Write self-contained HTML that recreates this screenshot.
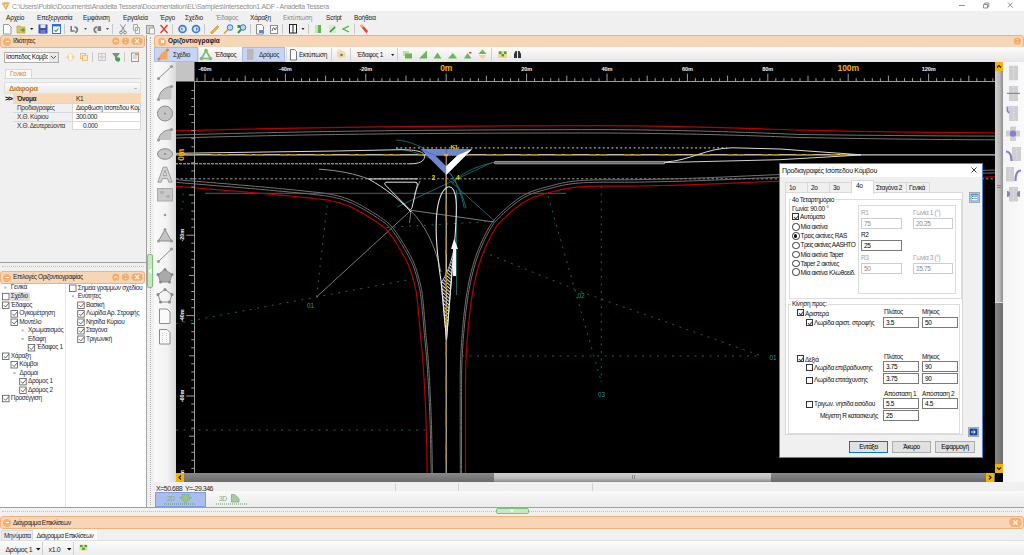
<!DOCTYPE html>
<html><head><meta charset="utf-8">
<style>
*{margin:0;padding:0;box-sizing:border-box}
html,body{width:1024px;height:555px;overflow:hidden}
body{position:relative;background:#f0f0f0;font-family:"Liberation Sans",sans-serif;font-size:6.5px;letter-spacing:-0.35px;color:#000;line-height:1}
.a{position:absolute}
.t{position:absolute;white-space:nowrap}
.hdr{position:absolute;height:13px;background:#f7d6b8;border:1px solid #f3b078;border-radius:3px}
.hdr .mi{position:absolute;left:2px;top:1.5px;width:8px;height:8px;border-radius:50%;background:#f4b274}
.hdr .mi:after{content:"";position:absolute;left:2.5px;top:3.5px;width:3px;height:1.2px;background:#fff}
.hdr .mi.dot:after{left:2.5px;top:2.5px;width:3px;height:3px}
.hb{position:absolute;top:1px;width:10px;height:10px;border-radius:5px;background:#f3b27a}
.sep{position:absolute;width:1px;background:#c8c8c8}
.cb{position:absolute;width:7px;height:7px;border:1px solid #333;background:#fff}
.cb.k:after{content:"";position:absolute;left:1.6px;top:0.2px;width:1.8px;height:3.6px;border:solid #444;border-width:0 .9px .9px 0;transform:rotate(40deg)}
.rd{position:absolute;width:7.5px;height:7.5px;border:1px solid #333;border-radius:50%;background:#fff}
.rd.k:after{content:"";position:absolute;left:1.2px;top:1.2px;width:3.1px;height:3.1px;border-radius:50%;background:#111}
.inp{position:absolute;height:11px;border:1px solid #7a7a7a;background:#fff;padding-left:2px;font-size:6.5px;line-height:9px}
.inp.d{border-color:#ccc;color:#8a8a8a;background:#fff}
.btn{position:absolute;height:12px;border:1px solid #adadad;background:#e1e1e1;text-align:center;line-height:10px}
</style></head><body>

<!-- Title bar -->
<div class="a" style="left:0;top:0;width:1024px;height:11px;background:#fff"></div>
<svg class="a" style="left:1px;top:1px" width="10" height="10" viewBox="0 0 10 10"><path d="M0.5 2 Q4.5 0.5 9 1.5 L5 9.5 Z" fill="#f6b26a"/><path d="M3.6 4 L5.6 3.6 L4.6 5.6 Z" fill="#fff"/></svg>
<div class="t" style="left:12px;top:2.8px;color:#8f8f8f;font-size:7px;letter-spacing:-0.3px">C:\Users\Public\Documents\Anadelta Tessera\Documentation\EL\Samples\Intersection1.ADF - Anadelta Tessera</div>
<svg class="a" style="left:955px;top:0" width="69" height="11" viewBox="955 0 69 11"><path d="M959 5.5h6" stroke="#777" stroke-width=".8"/><path d="M983.5 4.5h4v3.5h-4z M984.8 4.5v-1.5h4v3.8h-1.3" fill="none" stroke="#777" stroke-width=".8"/><path d="M1008 2.5l4.5 5M1012.5 2.5l-4.5 5" stroke="#777" stroke-width=".8"/></svg>

<!-- Menu bar -->
<div class="t" style="left:6px;top:15px;color:#1a1a1a;letter-spacing:-0.2px">Αρχείο</div>
<div class="t" style="left:37px;top:15px;color:#1a1a1a;letter-spacing:-0.2px">Επεξεργασία</div>
<div class="t" style="left:83px;top:15px;color:#1a1a1a;letter-spacing:-0.2px">Εμφάνιση</div>
<div class="t" style="left:123px;top:15px;color:#1a1a1a;letter-spacing:-0.2px">Εργαλεία</div>
<div class="t" style="left:160px;top:15px;color:#1a1a1a;letter-spacing:-0.2px">Έργο</div>
<div class="t" style="left:185px;top:15px;color:#1a1a1a;letter-spacing:-0.2px">Σχέδιο</div>
<div class="t" style="left:216px;top:15px;color:#8a8a8a;letter-spacing:-0.2px">Έδαφος</div>
<div class="t" style="left:250px;top:15px;color:#1a1a1a;letter-spacing:-0.2px">Χάραξη</div>
<div class="t" style="left:283px;top:15px;color:#8a8a8a;letter-spacing:-0.2px">Εκτύπωση</div>
<div class="t" style="left:326px;top:15px;color:#1a1a1a;letter-spacing:-0.2px">Script</div>
<div class="t" style="left:354px;top:15px;color:#1a1a1a;letter-spacing:-0.2px">Βοήθεια</div>

<!-- Toolbar -->
<svg class="a" style="left:0;top:23px" width="380" height="12" viewBox="0 0 380 12">
<!-- new doc -->
<path d="M3.5 1.5h5l2.5 2.5v7h-7.5z" fill="#fff" stroke="#9a9a9a" stroke-width="1"/>
<!-- open folder -->
<path d="M17 3h3l1 1h4v6h-8z" fill="#e6c25a" stroke="#b8942a" stroke-width=".6"/>
<path d="M20 7h4M22.5 5.5l1.7 1.5-1.7 1.5" stroke="#3aa640" stroke-width="1.2" fill="none"/>
<path d="M30 5h3.5l-1.75 2z" fill="#222"/>
<!-- save -->
<rect x="38.5" y="1.5" width="9" height="9" fill="#3e50b8"/>
<rect x="40.5" y="1.5" width="5" height="3.5" fill="#e8e8f4"/>
<rect x="40.5" y="7" width="5" height="3.5" fill="#6c7cd0"/>
<!-- window icon -->
<rect x="52.5" y="1.5" width="8" height="9" fill="#fff" stroke="#3a6fc8" stroke-width="1"/>
<rect x="52.5" y="1.5" width="8" height="2" fill="#3a6fc8"/>
<path d="M54.5 7l1.5 1.5 2.5-3" stroke="#2a9a40" stroke-width="1.1" fill="none"/>
<rect x="64" y="1" width="1" height="10" fill="#c8c8c8"/>
<!-- undo -->
<path d="M71.2 3v5h3.5" stroke="#7a7a7a" stroke-width="1.6" fill="none"/><path d="M74.5 4.2a2.6 2.6 0 1 1 0.5 5.2" stroke="#7a7a7a" stroke-width="1.8" fill="none"/>
<path d="M84 5h3l-1.5 2z" fill="#555"/>
<!-- redo -->
<path d="M97 4.2a2.6 2.6 0 1 0 -0.3 5.2" stroke="#7a7a7a" stroke-width="1.8" fill="none"/><rect x="97.5" y="3.2" width="3.6" height="4.8" fill="#7a7a7a"/>
<path d="M106 5h3l-1.5 2z" fill="#555"/>
<rect x="112" y="1" width="1" height="10" fill="#c8c8c8"/>
<!-- cut -->
<path d="M120.5 1.5l4.5 7M125.5 1.5l-4.5 7" stroke="#8a8a8a" stroke-width="1"/>
<circle cx="121" cy="9.5" r="1.4" fill="none" stroke="#8a8a8a"/><circle cx="125" cy="9.5" r="1.4" fill="none" stroke="#8a8a8a"/>
<!-- copy -->
<path d="M133.5 1.5h4v6h-4z M135.5 4.5h4v6h-4z" fill="#f4f4f4" stroke="#a8a8a8" stroke-width="1"/>
<!-- paste -->
<rect x="146.5" y="2.5" width="7" height="8" fill="#d0d0d0" stroke="#9a9a9a"/>
<rect x="149.5" y="5" width="5" height="6" fill="#f4f4f4" stroke="#9a9a9a" stroke-width=".8"/>
<!-- red X -->
<path d="M160.5 2l7 8M167.5 2l-7 8" stroke="#e53d2a" stroke-width="1.4"/>
<rect x="172" y="1" width="1" height="10" fill="#c8c8c8"/>
<!-- blue circles -->
<circle cx="182.5" cy="6" r="4.3" fill="#3a7ad8"/><circle cx="182.5" cy="6" r="2.6" fill="#fff" opacity=".85"/><path d="M180.5 6l2-1.8v3.6z" fill="#3a7ad8"/>
<circle cx="196" cy="6" r="4.3" fill="#3a7ad8"/><circle cx="196" cy="6" r="2.6" fill="#fff" opacity=".85"/><path d="M198 6l-2-1.8v3.6z" fill="#3a7ad8"/>
<rect x="204" y="1" width="1" height="10" fill="#c8c8c8"/>
<!-- ruler -->
<path d="M210.5 9.5l7-7 1.5 1.5-7 7z" fill="#e8b840" stroke="#b88a20" stroke-width=".6"/>
<!-- magnifier -->
<circle cx="230" cy="4.5" r="2.8" fill="#bcd8f4" stroke="#3a78c8" stroke-width="1"/><path d="M228 6.5l-4 4" stroke="#d8a020" stroke-width="1.6"/>
<circle cx="243" cy="4.5" r="2.8" fill="#bcd8f4" stroke="#3a78c8" stroke-width="1"/><path d="M241 6.5l-3 3.5" stroke="#3a9a30" stroke-width="2"/><rect x="237.5" y="2" width="3" height="3" fill="#3a9a30"/>
<rect x="250" y="1" width="1" height="10" fill="#c8c8c8"/>
<!-- doc -->
<path d="M256.5 1.5h5l2 2v7.5h-7z" fill="#fff" stroke="#8a8a8a"/><rect x="259" y="7" width="4" height="3" fill="#5a8ad8"/>
<rect x="270.5" y="2.5" width="7" height="8" fill="#fff" stroke="#8a8a8a"/><path d="M272 8c1-4 2-4 2.5-2s1 1 2-2" stroke="#333" stroke-width=".8" fill="none"/>
<rect x="282" y="1" width="1" height="10" fill="#c8c8c8"/>
<!-- window split -->
<rect x="289.5" y="1.5" width="7" height="8.5" fill="#fff" stroke="#222" stroke-width="1"/><rect x="292.5" y="1.5" width="1" height="8.5" fill="#222"/>
<path d="M301.5 5h3l-1.5 2z" fill="#222"/>
<rect x="308" y="1" width="1" height="10" fill="#c8c8c8"/>
<!-- green icons -->
<rect x="315" y="2" width="6" height="8" fill="#c4e4a8"/><rect x="318" y="2" width="3" height="8" fill="#5cb84a"/>
<rect x="329" y="2" width="7" height="8" fill="#d8ecc8"/><path d="M330 9l5-5" stroke="#2a9a30" stroke-width="1.6"/>
<rect x="342" y="2" width="7" height="8" fill="#eef4e4"/><path d="M349 3l-6 3 6 3" stroke="#4ab040" stroke-width="1.3" fill="none"/>
<rect x="354" y="1" width="1" height="10" fill="#c8c8c8"/>
<!-- pencil -->
<path d="M360 2.5l2-1 6 6.5-1.5 2.5z" fill="#e84030"/><path d="M360 2.5l2-1 2 2-2 1z" fill="#f0c040"/>
</svg>


<!-- Left properties panel -->
<div class="hdr" style="left:0;top:35px;width:145px"><div class="mi"></div></div>
<div class="t" style="left:13px;top:38px;color:#222">Ιδιότητες</div>
<!-- header buttons -->
<svg class="a" style="left:110px;top:35px" width="36" height="12" viewBox="110 35 36 12"><circle cx="115.8" cy="41.1" r="3.6" fill="#f2ae70"/><circle cx="125.5" cy="41.1" r="3.6" fill="#f2ae70"/><rect x="131.4" y="37.5" width="11.4" height="7.2" rx="3.6" fill="#f2ae70"/><path d="M114.2 41.9l1.6-1.6 1.6 1.6" stroke="#fff" stroke-width="1" fill="none"/><path d="M125.5 39.2v0.8M125.5 42.2v0.8" stroke="#fff" stroke-width="1.1"/><path d="M135.3 39.1l3.6 4M138.9 39.1l-3.6 4" stroke="#fff" stroke-width="1.1"/></svg>
<!-- combo -->
<div class="a" style="left:4px;top:52px;width:55px;height:11px;background:#fff;border:1px solid #adadad"></div>
<div class="a" style="left:49px;top:53px;width:9px;height:9px;background:#e8e8e8"></div>
<div class="t" style="left:6px;top:54px;color:#111;width:42px;overflow:hidden">Ισόπεδος Κόμβος</div>
<svg class="a" style="left:50px;top:55px" width="7" height="5"><path d="M1 1l2.5 2.5 2.5-2.5" stroke="#555" fill="none"/></svg>
<svg class="a" style="left:64px;top:51px" width="80" height="12" viewBox="64 0 80 12">
<path d="M66 6l4.5-4.5 4.5 4.5-4.5 4.5z" fill="#f4d6a0"/><rect x="69.5" y="3" width="2" height="6" fill="#fff"/>
<rect x="80.5" y="2.5" width="5" height="5" fill="none" stroke="#f0c070"/><rect x="82.5" y="4.5" width="5" height="5" fill="#fbe8c0" stroke="#f0c070"/>
<rect x="92" y="1" width="1" height="10" fill="#c8c8c8"/>
<rect x="98.5" y="2.5" width="7" height="7" fill="#eee" stroke="#c8c8c8"/><path d="M98.5 6h7M102 2.5v7" stroke="#c8c8c8"/>
<path d="M112 2h8l-3 4v4l-2-1v-3z" fill="#888"/><circle cx="118" cy="8.5" r="2.2" fill="#3aa83a"/>
<rect x="124" y="1" width="1" height="10" fill="#c8c8c8"/>
<rect x="131.5" y="2" width="7" height="8.5" fill="#f4f4f4" stroke="#9a9a9a"/><path d="M133 5h4M133 7h4" stroke="#aaa" stroke-width=".7"/><path d="M135 3.5h4" stroke="#e89030" stroke-width="1.2"/>
</svg>
<!-- tab strip -->
<div class="a" style="left:5px;top:69px;width:27px;height:10px;background:#fafafa;border:1px solid #d8d8d8;border-bottom:none"></div>
<div class="a" style="left:4px;top:78px;width:137px;height:1px;background:#d8d8d8"></div>
<div class="t" style="left:10px;top:71px;color:#d08a40">Γενικά</div>
<!-- property grid -->
<div class="a" style="left:4px;top:82px;width:137px;height:12px;background:linear-gradient(#fbfbfb,#e9e9e9);border:1px solid #e0e0e0"></div>
<div class="t" style="left:9px;top:85px;color:#c8782a;font-weight:bold;font-size:7.5px">Διάφορα</div>
<div class="a" style="left:134px;top:88px;width:3px;height:1px;background:#bbb"></div>
<div class="a" style="left:13px;top:94px;width:128px;height:36px;background:#fff;border:1px solid #d8d8d8"></div>
<div class="a" style="left:13px;top:94px;width:128px;height:9px;background:#f8d7b5"></div>
<div class="a" style="left:13px;top:103px;width:59px;height:27px;background:#f0f0f0"></div>
<div class="a" style="left:13px;top:103px;width:128px;height:1px;background:#d8d8d8"></div>
<div class="a" style="left:13px;top:112px;width:128px;height:1px;background:#d8d8d8"></div>
<div class="a" style="left:13px;top:121px;width:128px;height:1px;background:#d8d8d8"></div>
<div class="a" style="left:72px;top:94px;width:1px;height:36px;background:#d8d8d8"></div>
<div class="t" style="left:5px;top:95px;font-weight:bold;font-size:8px;letter-spacing:-1.5px">&gt;&gt;</div>
<div class="t" style="left:17px;top:96px;color:#222;font-weight:bold">Όνομα</div>
<div class="t" style="left:76px;top:96px;color:#222">K1</div>
<div class="t" style="left:17px;top:105px;color:#333">Προδιαγραφές</div>
<div class="t" style="left:76px;top:105px;color:#222;width:64px;overflow:hidden">Διόρθωση Ισόπεδου Κόμβου</div>
<div class="t" style="left:17px;top:114px;color:#333">Χ.Θ. Κύριου</div>
<div class="t" style="left:76px;top:114px;color:#222">300.000</div>
<div class="t" style="left:17px;top:123px;color:#333">Χ.Θ. Δευτερεύοντα</div>
<div class="t" style="left:83px;top:123px;color:#222">0.000</div>


<!-- Splitter vertical -->
<div class="a" style="left:146px;top:35px;width:1px;height:472px;background:#a0a0a0"></div>
<div class="a" style="left:150px;top:37px;width:1px;height:468px;border-left:1px dotted #b0b0b0"></div>

<!-- Main panel header -->
<div class="hdr" style="left:154px;top:35px;width:870px"><div class="mi dot" style="left:3px"></div></div>
<div class="t" style="left:168px;top:38px;color:#1a1a2a;font-weight:bold;letter-spacing:0">Οριζοντιογραφία</div>

<!-- Main tool row -->
<div class="a" style="left:154px;top:47px;width:870px;height:15px;background:linear-gradient(#fdfdfd,#e6e6e6)"></div>
<div class="a" style="left:154px;top:47px;width:44px;height:15px;background:#c7d5f3;border:1px solid #a8bcec"></div>
<div class="a" style="left:242px;top:47px;width:43px;height:15px;background:#c7d5f3;border:1px solid #a8bcec"></div>
<div class="a" style="left:198px;top:48px;width:1px;height:13px;background:#dcdcdc"></div>
<div class="a" style="left:286px;top:48px;width:1px;height:13px;background:#dcdcdc"></div>
<div class="t" style="left:173px;top:52px;color:#222">Σχέδιο</div>
<div class="t" style="left:215px;top:52px;color:#222">Έδαφος</div>
<div class="t" style="left:259px;top:52px;color:#222">Δρόμος</div>
<div class="t" style="left:299px;top:52px;color:#222">Εκτύπωση</div>
<div class="t" style="left:357px;top:52px;color:#222">Έδαφος 1</div>
<svg class="a" style="left:150px;top:47px" width="380" height="15" viewBox="150 0 380 15">
<path d="M159 12.5c0-5 4-9 8.5-9.5v9.5z" fill="#f2a860"/><circle cx="159" cy="12" r="1.6" fill="#d08a48"/><circle cx="167.5" cy="3" r="1.6" fill="#d08a48"/>
<path d="M206 3.5l-4.5 8h9z" fill="none" stroke="#7cbc78" stroke-width="1.6"/><circle cx="206" cy="3.5" r="1.8" fill="#7cbc78"/><circle cx="201.5" cy="11.5" r="1.8" fill="#7cbc78"/><circle cx="210.5" cy="11.5" r="1.8" fill="#7cbc78"/>
<rect x="247" y="2" width="6.5" height="11" fill="#b8b8b8"/>
<path d="M290.5 2.5h4l2 2v8.5h-6z" fill="#fff" stroke="#555" stroke-width=".8"/>
<rect x="331" y="1" width="1" height="13" fill="#d0d0d0"/>
<path d="M337 4l3-1.5 5.5 3v4.5l-5.5 1.5-3-2z" fill="#f4dca0"/><circle cx="341.5" cy="8" r="1.2" fill="#5a60d8"/>
<rect x="350" y="1" width="1" height="13" fill="#d0d0d0"/>
<path d="M391 7h3.5l-1.75 2z" fill="#222"/>
<rect x="397" y="1" width="1" height="13" fill="#d0d0d0"/>
<rect x="403" y="4" width="6" height="5" fill="#c4e0a0"/><rect x="405" y="6.5" width="7" height="5" fill="#66b85a"/>
<path d="M419 11.5l8-8v8z" fill="#66b85a"/><path d="M420 10l6-6" stroke="#d8f0c0" stroke-width=".8"/>
<path d="M433.5 11.5l4-6 4 6z" fill="#66b85a"/>
<path d="M448 11.5l4.5-6 4.5 6z" fill="#66b85a"/><path d="M449 10l4-4 4 4" stroke="#c8e8b8" stroke-width=".8" fill="none"/>
<path d="M464 11.5l3.5-5.5 4 5.5z" fill="#66b85a"/><rect x="469" y="5" width="2.5" height="1.5" fill="#e04040"/>
<path d="M478.5 7l4-4.5 4 4.5z" fill="#66b85a"/><path d="M478.5 8l4 4.5 4-4.5z" fill="#f0d890"/>
<rect x="491" y="1" width="1" height="13" fill="#d0d0d0"/>
<rect x="498" y="4" width="9" height="7" fill="#e8d890"/><rect x="499" y="4.5" width="2.5" height="2.5" fill="#3aa83a"/><rect x="504" y="4.5" width="2.5" height="2.5" fill="#3aa83a"/><rect x="501.5" y="7" width="2.5" height="2.5" fill="#3aa83a"/>
<path d="M514 11v-4l1.5-3h1.5v7zM521 11v-4l-1.5-3h-1.5v7z" fill="#333"/>
</svg>


<!-- Left vertical toolbar -->
<div class="a" style="left:154px;top:62px;width:22px;height:420px;background:linear-gradient(90deg,#fafafa,#f2f2f2 60%,#d8d8d8)"></div>
<svg class="a" style="left:154px;top:62px" width="22" height="290" viewBox="154 62 22 290">
<g fill="#c4c4c4" stroke="#8c8c8c" stroke-width="1">
<path d="M158.5 78.5L171.5 66.5" fill="none"/><circle cx="158.5" cy="78.5" r="1.6" stroke="none" fill="#999"/><circle cx="171.5" cy="66.5" r="1.6" stroke="none" fill="#999"/>
<path d="M158.5 99.5C159 92 164 87 171.5 86.5V99.5Z" stroke="none"/><path d="M158.5 99.5C159 92 164 87 171.5 86.5" fill="none"/><circle cx="158.5" cy="99.5" r="1.6" stroke="none" fill="#999"/><circle cx="171.5" cy="86.5" r="1.6" stroke="none" fill="#999"/>
<circle cx="165" cy="113.5" r="7.5"/><circle cx="165" cy="113.5" r="1" fill="#888" stroke="none"/>
<path d="M158.5 140C159 134 164 130 171.5 129.5V140Z" stroke="none"/><path d="M158.5 140C159 134 164 130 171.5 129.5" fill="none"/><circle cx="158.5" cy="140" r="1.6" stroke="none" fill="#999"/><circle cx="171.5" cy="129.5" r="1.6" stroke="none" fill="#999"/>
<ellipse cx="165" cy="154" rx="7.5" ry="5.3"/><circle cx="165" cy="154" r="1" fill="#888" stroke="none"/>
</g>
<path d="M157.8 182.2L163.2 167.2h3.6L172.2 182.2h-3.4l-1.2-3.6h-5.2l-1.2 3.6z M163.3 175.6h3.4L165 170.3z" fill="#d4d4d4" stroke="#8c8c8c" stroke-width=".8" fill-rule="evenodd"/>
<rect x="157.5" y="188.5" width="15" height="12.5" fill="#c8c8c8" stroke="#aaa"/><rect x="160" y="191" width="4" height="3" fill="#b4b4b4"/><rect x="166" y="195" width="4" height="3" fill="#b4b4b4"/>
<circle cx="165" cy="215" r="1.3" fill="#999"/>
<path d="M158.5 241L165 229.5L171.5 241Z" fill="#c4c4c4" stroke="#8c8c8c"/><circle cx="158.5" cy="241" r="1.5" fill="#999"/><circle cx="171.5" cy="241" r="1.5" fill="#999"/><circle cx="165" cy="229.5" r="1.5" fill="#999"/>
<path d="M158.5 261.5L171.5 249" stroke="#8c8c8c" fill="none"/><circle cx="158.5" cy="261.5" r="1.5" fill="#999"/><circle cx="171.5" cy="249" r="1.5" fill="#999"/>
<path d="M165 269.5L172 274.5L169.5 282H160.5L158 274.5Z" fill="#aaa" stroke="#8c8c8c"/><g fill="#888"><circle cx="165" cy="269.5" r="1.5"/><circle cx="172" cy="274.5" r="1.5"/><circle cx="169.5" cy="282" r="1.5"/><circle cx="160.5" cy="282" r="1.5"/><circle cx="158" cy="274.5" r="1.5"/></g>
<path d="M165 289.5L172 294.5L169.5 302H160.5L158 294.5Z" fill="none" stroke="#8c8c8c"/><g fill="#888"><circle cx="165" cy="289.5" r="1.5"/><circle cx="172" cy="294.5" r="1.5"/><circle cx="169.5" cy="302" r="1.5"/><circle cx="160.5" cy="302" r="1.5"/><circle cx="158" cy="294.5" r="1.5"/></g>
<path d="M159.5 309h7.5l3 3v11.5h-10.5z" fill="#fafafa" stroke="#8c8c8c"/>
<path d="M159.5 329.5h7.5l3 3v11.5h-10.5z" fill="#fafafa" stroke="#8c8c8c"/><path d="M162.5 333v9M166.5 333v9" stroke="#bbb" stroke-width=".7" stroke-dasharray="1 1"/>
</svg>
<div class="a" style="left:147px;top:254px;width:6px;height:34px;background:#c9e7c3;border:1px solid #7cc47a;border-radius:2px"></div>
<svg class="a" style="left:147px;top:268px" width="6" height="6"><path d="M4.5 0.5v5l-3.5-2.5z" fill="#fff"/></svg>


<!-- Canvas -->
<div class="a" style="left:176px;top:62px;width:819px;height:411px;background:#000"></div>
<!--CANVAS-->
<svg class="a" style="left:176px;top:62px" width="819" height="411" viewBox="176 62 819 411" font-family="Liberation Sans">
<defs><clipPath id="nose"><rect x="440" y="250" width="14" height="90"/></clipPath><clipPath id="cc"><rect x="176" y="62" width="819" height="411"/></clipPath><pattern id="hatch" patternUnits="userSpaceOnUse" width="2.6" height="2.6" patternTransform="rotate(-50)"><rect width="2.6" height="2.6" fill="#000"/><rect width="1.1" height="2.6" fill="#e0e0e0"/></pattern><pattern id="hatch2" patternUnits="userSpaceOnUse" width="2" height="2"><rect width="2" height="2" fill="#666"/><rect width="1" height="1" fill="#ccc"/></pattern></defs>
<g clip-path="url(#cc)" fill="none">
<g stroke="#187070" stroke-width="0.9" stroke-dasharray="2 5.5">
<path d="M176 323.6 L316.5 297 L418 278"/>
<path d="M316.5 297 L327.4 203"/>
<path d="M386.5 227.5 L494 221.3"/>
<path d="M176 430 L427 430"/>
<path d="M462 356 L762 356"/>
<path d="M601.3 186 L601.3 382"/>
<path d="M548 196 L601.3 382"/>
<path d="M483.2 251.9 L583 292.6 L761.7 356"/>
<path d="M181 186 Q186 200 180 215"/>
<path d="M176 178.8 L995 178.8" stroke="#a0a8a8" stroke-dasharray="2.5 2"/>
</g>
<g stroke="#187070" stroke-width="0.9">
<path d="M396 140 C425 142, 455 165, 466 208"/>
<path d="M396 148.5 C420 152, 440 160, 452 176 C 458 186, 462 196, 464.3 208.4"/>
<path d="M496 162 C475 166, 460 174, 452 184"/>
<path d="M397 207 L492 162.5"/>
<path d="M449 180 L495 221.4"/>
<path d="M456.5 190 L456.5 295"/>
</g>
<g stroke="#9a9a9a" stroke-width="0.8">
<path d="M205 193.3 L566 193.3" stroke="#707070"/>
<path d="M316.5 297 L411 210.3"/>
<path d="M411 210.3 L494 222"/>
<path d="M411 210.3 L409.5 223"/>
<path d="M411 211 C 425 225, 435 245, 441 272"/>
</g>
<g stroke="#b80000" stroke-width="1.2">
<path d="M176 130.8 C 300 127.2, 400 125.7, 600 125.7 C 700 126, 760 129, 800 130.2 C 880 132, 940 132.8, 995 132.9"/>
<path d="M176.0 186.3 L179.7 186.6 L184.3 187.0 L189.9 187.4 L196.1 187.9 L202.8 188.5 L209.9 189.1 L217.1 189.7 L224.4 190.3 L231.5 190.8 L238.2 191.4 L244.4 191.9 L250.0 192.4 L255.1 192.8 L260.0 193.3 L264.7 193.7 L269.2 194.1 L273.5 194.5 L277.8 194.9 L281.8 195.2 L285.7 195.6 L289.5 196.0 L293.1 196.3 L296.6 196.7 L300.0 197.0 L303.2 197.3 L306.3 197.6 L309.2 197.9 L311.9 198.2 L314.5 198.5 L317.0 198.8 L319.4 199.0 L321.6 199.3 L323.8 199.6 L325.9 199.9 L328.0 200.2 L330.0 200.6 L331.9 201.0 L333.7 201.3 L335.3 201.7 L336.9 202.1 L338.4 202.4 L339.8 202.8 L341.1 203.2 L342.4 203.7 L343.8 204.2 L345.1 204.7 L346.5 205.2 L348.0 205.8 L349.5 206.4 L351.0 207.1 L352.5 207.8 L354.0 208.6 L355.5 209.3 L357.0 210.1 L358.5 210.9 L360.0 211.8 L361.5 212.6 L363.0 213.5 L364.5 214.4 L366.0 215.3 L367.5 216.2 L369.1 217.2 L370.7 218.2 L372.3 219.2 L374.0 220.2 L375.6 221.3 L377.1 222.3 L378.7 223.4 L380.1 224.4 L381.5 225.4 L382.8 226.4 L384.0 227.4 L385.1 228.3 L386.0 229.2 L386.9 230.1 L387.7 231.0 L388.4 231.8 L389.1 232.7 L389.7 233.5 L390.3 234.4 L391.0 235.3 L391.6 236.2 L392.3 237.2 L393.0 238.2 L393.8 239.3 L394.5 240.4 L395.3 241.6 L396.1 242.8 L396.8 244.0 L397.6 245.2 L398.4 246.5 L399.1 247.7 L399.9 249.0 L400.6 250.3 L401.3 251.5 L402.0 252.7 L402.7 253.9 L403.3 255.1 L404.0 256.2 L404.6 257.3 L405.3 258.5 L405.9 259.6 L406.5 260.8 L407.1 262.0 L407.6 263.2 L408.2 264.4 L408.8 265.7 L409.3 267.0 L409.8 268.4 L410.3 269.8 L410.8 271.3 L411.3 272.8 L411.8 274.4 L412.3 276.0 L412.7 277.5 L413.2 279.1 L413.6 280.6 L414.0 282.1 L414.4 283.6 L414.7 285.0 L415.0 286.3 L415.3 287.5 L415.5 288.6 L415.8 289.7 L416.0 290.7 L416.2 291.8 L416.4 292.8 L416.5 294.0 L416.7 295.3 L416.9 296.7 L417.1 298.2 L417.3 300.0 L417.5 301.9 L417.7 304.0 L417.9 306.2 L418.2 308.5 L418.4 310.9 L418.6 313.4 L418.8 316.0 L419.0 318.7 L419.3 321.4 L419.5 324.2 L419.7 327.1 L420.0 330.0 L420.3 333.0 L420.5 336.0 L420.8 339.1 L421.1 342.2 L421.5 345.5 L421.8 348.8 L422.1 352.1 L422.4 355.6 L422.7 359.1 L423.0 362.6 L423.2 366.3 L423.5 370.0 L423.7 373.8 L424.0 377.7 L424.2 381.7 L424.5 385.8 L424.7 390.0 L424.9 394.2 L425.1 398.4 L425.3 402.7 L425.5 407.1 L425.7 411.4 L425.8 415.7 L426.0 420.0 L426.1 424.5 L426.3 429.3 L426.4 434.3 L426.5 439.4 L426.7 444.6 L426.8 449.6 L426.9 454.5 L426.9 459.1 L427.0 463.4 L427.1 467.2 L427.1 470.4 L427.2 473.0"/>
<path d="M1000.0 176.8 L994.1 176.9 L986.5 177.0 L977.5 177.2 L967.4 177.4 L956.5 177.6 L945.0 177.8 L933.2 178.0 L921.5 178.2 L910.0 178.5 L899.1 178.7 L889.0 178.8 L880.0 179.0 L872.0 179.1 L864.6 179.2 L857.7 179.3 L851.1 179.4 L844.8 179.5 L838.8 179.6 L832.7 179.7 L826.7 179.8 L820.5 179.9 L814.0 180.0 L807.2 180.2 L800.0 180.4 L792.2 180.7 L784.0 181.0 L775.5 181.3 L766.7 181.7 L757.7 182.0 L748.8 182.4 L739.8 182.8 L731.1 183.2 L722.7 183.6 L714.6 183.9 L707.0 184.2 L700.0 184.5 L693.6 184.7 L687.7 184.9 L682.2 185.1 L677.0 185.2 L672.2 185.3 L667.5 185.4 L663.0 185.5 L658.5 185.6 L654.1 185.7 L649.5 185.8 L644.9 185.9 L640.0 186.0 L634.9 186.1 L629.7 186.1 L624.4 186.1 L619.0 186.1 L613.7 186.1 L608.3 186.1 L603.1 186.2 L598.0 186.2 L593.1 186.3 L588.5 186.4 L584.1 186.6 L580.0 186.9 L576.2 187.2 L572.7 187.6 L569.5 188.1 L566.4 188.6 L563.6 189.1 L560.8 189.7 L558.3 190.3 L555.8 190.9 L553.4 191.5 L551.1 192.2 L548.8 192.8 L546.5 193.4 L544.3 194.0 L542.2 194.5 L540.3 195.1 L538.5 195.6 L536.7 196.2 L535.0 196.7 L533.4 197.4 L531.8 198.0 L530.1 198.8 L528.5 199.6 L526.8 200.5 L525.0 201.5 L523.1 202.7 L521.2 203.9 L519.3 205.4 L517.3 206.9 L515.3 208.4 L513.3 210.0 L511.4 211.7 L509.5 213.3 L507.7 214.9 L506.0 216.4 L504.4 217.9 L503.0 219.3 L501.7 220.6 L500.6 221.8 L499.6 222.9 L498.6 223.9 L497.8 224.9 L497.0 226.0 L496.3 227.0 L495.5 228.1 L494.8 229.3 L494.0 230.5 L493.3 231.9 L492.4 233.4 L491.5 235.0 L490.6 236.8 L489.6 238.6 L488.7 240.5 L487.8 242.4 L486.8 244.4 L485.9 246.5 L485.0 248.6 L484.1 250.7 L483.2 252.9 L482.4 255.0 L481.6 257.2 L480.8 259.4 L480.1 261.5 L479.4 263.7 L478.7 265.9 L478.1 268.1 L477.4 270.4 L476.8 272.7 L476.2 275.1 L475.6 277.4 L475.1 279.9 L474.5 282.4 L474.0 285.0 L473.5 287.6 L473.0 290.4 L472.5 293.1 L472.1 295.9 L471.6 298.8 L471.2 301.7 L470.8 304.7 L470.4 307.7 L470.0 310.7 L469.7 313.8 L469.3 316.9 L469.0 320.0 L468.7 323.2 L468.4 326.4 L468.1 329.6 L467.8 333.0 L467.5 336.3 L467.2 339.7 L467.0 343.1 L466.7 346.5 L466.5 349.9 L466.3 353.3 L466.2 356.7 L466.0 360.0 L465.9 363.2 L465.8 366.3 L465.7 369.2 L465.6 372.1 L465.6 375.0 L465.6 377.9 L465.5 381.0 L465.5 384.2 L465.5 387.7 L465.5 391.4 L465.5 395.5 L465.5 400.0 L465.5 405.2 L465.5 411.1 L465.5 417.6 L465.5 424.6 L465.5 431.8 L465.5 439.0 L465.5 446.1 L465.5 452.9 L465.5 459.1 L465.5 464.7 L465.5 469.4 L465.5 473.0"/>
</g>
<g stroke="#727272" stroke-width="1">
<path d="M176 135 C 300 131.5, 400 129.8, 600 129.6 C 700 130, 760 133, 800 134.5 C 880 135.5, 940 136, 995 136.1"/>
<path d="M176 138 C 300 134.5, 400 133, 600 133 C 700 133.5, 760 136, 800 137.5 C 880 139, 940 139.6, 995 139.8"/>
<path d="M176.3 182.4 L180.0 182.7 L184.6 183.1 L190.2 183.5 L196.4 184.0 L203.1 184.6 L210.2 185.2 L217.4 185.8 L224.7 186.4 L231.8 186.9 L238.5 187.5 L244.8 188.0 L250.3 188.5 L255.4 188.9 L260.3 189.4 L265.0 189.8 L269.5 190.2 L273.9 190.6 L278.1 191.0 L282.2 191.3 L286.1 191.7 L289.8 192.1 L293.5 192.4 L297.0 192.8 L300.4 193.1 L303.6 193.4 L306.7 193.7 L309.6 194.0 L312.3 194.3 L314.9 194.6 L317.4 194.9 L319.8 195.1 L322.1 195.4 L324.4 195.7 L326.5 196.0 L328.6 196.4 L330.7 196.7 L332.7 197.1 L334.5 197.5 L336.2 197.9 L337.8 198.2 L339.4 198.6 L340.9 199.1 L342.3 199.5 L343.7 200.0 L345.1 200.5 L346.5 201.0 L348.0 201.6 L349.5 202.2 L351.1 202.8 L352.6 203.5 L354.2 204.3 L355.8 205.0 L357.3 205.8 L358.9 206.7 L360.4 207.5 L361.9 208.4 L363.5 209.2 L365.0 210.1 L366.5 211.0 L368.0 211.9 L369.6 212.9 L371.2 213.8 L372.8 214.8 L374.4 215.9 L376.1 216.9 L377.7 218.0 L379.3 219.1 L380.9 220.1 L382.4 221.2 L383.9 222.3 L385.3 223.3 L386.5 224.4 L387.7 225.4 L388.8 226.4 L389.7 227.4 L390.6 228.3 L391.4 229.3 L392.2 230.2 L392.9 231.2 L393.5 232.1 L394.2 233.0 L394.8 234.0 L395.5 234.9 L396.2 235.9 L397.0 237.0 L397.8 238.2 L398.6 239.4 L399.4 240.6 L400.2 241.9 L401.0 243.2 L401.8 244.4 L402.5 245.7 L403.3 247.0 L404.0 248.3 L404.7 249.5 L405.4 250.7 L406.1 251.9 L406.8 253.1 L407.4 254.3 L408.1 255.4 L408.7 256.6 L409.4 257.8 L410.0 259.0 L410.6 260.2 L411.2 261.5 L411.8 262.8 L412.4 264.1 L413.0 265.6 L413.5 267.0 L414.1 268.5 L414.6 270.1 L415.1 271.6 L415.6 273.2 L416.1 274.8 L416.6 276.4 L417.0 278.0 L417.4 279.6 L417.8 281.1 L418.2 282.6 L418.6 284.1 L418.9 285.4 L419.2 286.6 L419.4 287.8 L419.7 288.9 L419.9 290.0 L420.1 291.1 L420.3 292.2 L420.5 293.4 L420.6 294.7 L420.8 296.2 L421.0 297.8 L421.2 299.5 L421.5 301.5 L421.7 303.6 L421.9 305.8 L422.1 308.2 L422.3 310.6 L422.6 313.1 L422.8 315.7 L423.0 318.4 L423.2 321.1 L423.5 323.9 L423.7 326.8 L424.0 329.6 L424.2 332.6 L424.5 335.6 L424.8 338.7 L425.1 341.8 L425.4 345.1 L425.7 348.4 L426.0 351.8 L426.3 355.2 L426.6 358.7 L426.9 362.3 L427.2 366.0 L427.5 369.7 L427.7 373.6 L428.0 377.5 L428.2 381.5 L428.4 385.6 L428.7 389.8 L428.9 394.0 L429.1 398.3 L429.3 402.6 L429.5 406.9 L429.7 411.2 L429.8 415.5 L430.0 419.9 L430.1 424.4 L430.3 429.2 L430.4 434.2 L430.5 439.3 L430.6 444.5 L430.8 449.5 L430.8 454.4 L430.9 459.1 L431.0 463.3 L431.1 467.1 L431.1 470.3 L431.2 472.9"/>
<path d="M176.5 179.7 L180.2 180.0 L184.9 180.4 L190.4 180.9 L196.6 181.4 L203.3 181.9 L210.4 182.5 L217.7 183.1 L224.9 183.7 L232.0 184.3 L238.7 184.9 L245.0 185.4 L250.6 185.9 L255.6 186.4 L260.5 186.8 L265.2 187.2 L269.8 187.6 L274.1 188.0 L278.3 188.4 L282.4 188.8 L286.3 189.2 L290.1 189.5 L293.7 189.9 L297.3 190.3 L300.6 190.6 L303.9 191.0 L306.9 191.3 L309.8 191.6 L312.6 191.9 L315.2 192.2 L317.7 192.4 L320.1 192.7 L322.4 193.0 L324.7 193.3 L326.9 193.7 L329.0 194.0 L331.1 194.4 L333.1 194.8 L335.0 195.2 L336.7 195.5 L338.4 196.0 L340.0 196.4 L341.5 196.8 L343.0 197.3 L344.5 197.8 L345.9 198.3 L347.4 198.8 L348.8 199.4 L350.4 200.0 L352.0 200.7 L353.6 201.5 L355.2 202.2 L356.8 203.0 L358.4 203.8 L359.9 204.7 L361.5 205.5 L363.0 206.4 L364.6 207.3 L366.1 208.2 L367.6 209.1 L369.2 210.0 L370.7 211.0 L372.3 212.0 L373.9 213.0 L375.6 214.0 L377.3 215.1 L378.9 216.2 L380.5 217.3 L382.1 218.4 L383.7 219.5 L385.2 220.6 L386.6 221.7 L387.9 222.8 L389.1 223.9 L390.2 224.9 L391.2 226.0 L392.2 227.0 L393.0 228.0 L393.8 229.0 L394.5 230.0 L395.2 230.9 L395.9 231.9 L396.5 232.8 L397.2 233.8 L397.9 234.8 L398.6 235.9 L399.4 237.1 L400.2 238.3 L401.0 239.6 L401.8 240.9 L402.6 242.1 L403.4 243.4 L404.2 244.7 L404.9 246.0 L405.7 247.3 L406.4 248.6 L407.1 249.8 L407.8 251.0 L408.4 252.2 L409.1 253.3 L409.7 254.5 L410.4 255.7 L411.0 256.9 L411.6 258.1 L412.3 259.4 L412.9 260.7 L413.5 262.1 L414.1 263.5 L414.7 264.9 L415.2 266.4 L415.8 267.9 L416.3 269.5 L416.8 271.1 L417.3 272.7 L417.8 274.4 L418.2 276.0 L418.7 277.6 L419.1 279.2 L419.5 280.7 L419.9 282.2 L420.2 283.7 L420.5 285.0 L420.8 286.2 L421.1 287.4 L421.3 288.5 L421.5 289.6 L421.7 290.8 L421.9 291.9 L422.1 293.2 L422.3 294.5 L422.4 296.0 L422.6 297.6 L422.8 299.4 L423.1 301.3 L423.3 303.5 L423.5 305.7 L423.7 308.0 L423.9 310.4 L424.1 313.0 L424.3 315.6 L424.5 318.2 L424.8 321.0 L425.0 323.8 L425.2 326.6 L425.5 329.5 L425.7 332.5 L426.0 335.5 L426.3 338.5 L426.6 341.7 L426.9 344.9 L427.2 348.2 L427.5 351.6 L427.8 355.1 L428.1 358.6 L428.4 362.2 L428.6 365.9 L428.9 369.6 L429.1 373.5 L429.4 377.4 L429.6 381.4 L429.8 385.5 L430.0 389.7 L430.2 393.9 L430.4 398.2 L430.6 402.5 L430.8 406.8 L431.0 411.2 L431.1 415.5 L431.3 419.8 L431.4 424.3 L431.6 429.1 L431.7 434.2 L431.8 439.3 L431.9 444.4 L432.0 449.5 L432.1 454.4 L432.2 459.1 L432.2 463.3 L432.3 467.1 L432.4 470.3 L432.4 472.9"/>
<path d="M999.9 172.9 L994.0 173.0 L986.4 173.1 L977.4 173.3 L967.3 173.5 L956.4 173.7 L944.9 173.9 L933.2 174.1 L921.4 174.3 L909.9 174.6 L899.0 174.7 L888.9 174.9 L879.9 175.1 L871.9 175.2 L864.5 175.3 L857.6 175.4 L851.1 175.5 L844.8 175.6 L838.7 175.7 L832.7 175.8 L826.6 175.9 L820.4 176.0 L813.9 176.1 L807.1 176.3 L799.9 176.5 L792.1 176.7 L783.9 177.0 L775.3 177.4 L766.5 177.8 L757.6 178.1 L748.6 178.5 L739.7 178.9 L730.9 179.3 L722.5 179.7 L714.4 180.0 L706.8 180.3 L699.9 180.6 L693.5 180.8 L687.6 181.0 L682.1 181.2 L676.9 181.3 L672.1 181.4 L667.4 181.5 L662.9 181.6 L658.4 181.7 L654.0 181.8 L649.5 181.9 L644.8 182.0 L639.9 182.1 L634.9 182.2 L629.7 182.2 L624.4 182.2 L619.0 182.2 L613.7 182.2 L608.3 182.2 L603.1 182.2 L598.0 182.3 L593.0 182.4 L588.3 182.5 L583.9 182.7 L579.7 183.0 L575.8 183.3 L572.3 183.7 L568.9 184.2 L565.7 184.7 L562.8 185.3 L560.0 185.9 L557.3 186.5 L554.8 187.1 L552.4 187.7 L550.1 188.4 L547.8 189.0 L545.5 189.6 L543.3 190.2 L541.2 190.7 L539.2 191.3 L537.3 191.8 L535.5 192.4 L533.7 193.0 L532.0 193.7 L530.2 194.4 L528.4 195.2 L526.7 196.1 L524.9 197.0 L523.0 198.1 L521.0 199.3 L519.0 200.7 L516.9 202.2 L514.9 203.7 L512.8 205.3 L510.8 207.0 L508.8 208.7 L506.9 210.3 L505.1 211.9 L503.3 213.5 L501.7 215.1 L500.2 216.5 L498.9 217.8 L497.7 219.0 L496.6 220.2 L495.6 221.4 L494.7 222.5 L493.8 223.6 L493.0 224.8 L492.2 226.0 L491.4 227.2 L490.6 228.5 L489.8 229.9 L488.9 231.5 L488.0 233.1 L487.1 234.9 L486.1 236.8 L485.1 238.7 L484.2 240.7 L483.2 242.8 L482.3 244.9 L481.3 247.1 L480.4 249.2 L479.5 251.4 L478.7 253.7 L477.9 255.9 L477.1 258.1 L476.3 260.3 L475.6 262.5 L474.9 264.8 L474.3 267.0 L473.6 269.3 L473.0 271.7 L472.4 274.1 L471.8 276.5 L471.2 279.0 L470.6 281.6 L470.1 284.2 L469.6 286.9 L469.1 289.7 L468.6 292.5 L468.1 295.3 L467.7 298.2 L467.3 301.2 L466.9 304.2 L466.5 307.2 L466.1 310.3 L465.7 313.3 L465.4 316.4 L465.0 319.6 L464.7 322.8 L464.4 326.0 L464.1 329.3 L463.8 332.6 L463.5 336.0 L463.2 339.4 L463.0 342.8 L462.8 346.2 L462.5 349.6 L462.4 353.1 L462.2 356.5 L462.0 359.8 L461.9 363.1 L461.8 366.2 L461.7 369.1 L461.6 372.0 L461.6 374.9 L461.6 377.9 L461.6 381.0 L461.5 384.2 L461.5 387.7 L461.5 391.4 L461.5 395.5 L461.5 400.0 L461.5 405.1 L461.5 411.1 L461.5 417.6 L461.5 424.6 L461.5 431.8 L461.5 439.0 L461.5 446.1 L461.5 452.9 L461.5 459.1 L461.5 464.7 L461.5 469.4 L461.5 473.0"/>
<path d="M999.9 170.0 L993.9 170.1 L986.4 170.3 L977.4 170.4 L967.3 170.6 L956.4 170.8 L944.9 171.1 L933.1 171.3 L921.4 171.5 L909.9 171.7 L899.0 171.9 L888.9 172.1 L879.9 172.3 L871.9 172.5 L864.5 172.6 L857.6 172.7 L851.0 172.8 L844.8 172.9 L838.7 172.9 L832.6 173.0 L826.6 173.1 L820.3 173.3 L813.9 173.4 L807.1 173.6 L799.8 173.8 L792.0 174.1 L783.8 174.4 L775.2 174.7 L766.4 175.1 L757.4 175.5 L748.5 175.9 L739.6 176.3 L730.8 176.7 L722.4 177.1 L714.3 177.4 L706.7 177.8 L699.8 178.0 L693.4 178.3 L687.5 178.4 L682.0 178.6 L676.9 178.8 L672.0 178.9 L667.4 179.0 L662.8 179.1 L658.4 179.2 L653.9 179.3 L649.4 179.4 L644.7 179.5 L639.9 179.6 L634.8 179.7 L629.7 179.8 L624.4 179.8 L619.0 179.8 L613.7 179.8 L608.3 179.8 L603.1 179.8 L598.0 179.9 L593.0 180.0 L588.2 180.2 L583.7 180.4 L579.5 180.7 L575.6 181.0 L572.0 181.4 L568.6 181.9 L565.4 182.5 L562.3 183.0 L559.5 183.6 L556.8 184.3 L554.3 184.9 L551.8 185.6 L549.5 186.2 L547.2 186.8 L544.9 187.4 L542.7 188.0 L540.6 188.6 L538.6 189.2 L536.7 189.8 L534.8 190.4 L533.0 191.0 L531.2 191.7 L529.4 192.4 L527.5 193.3 L525.7 194.2 L523.8 195.2 L521.9 196.3 L519.9 197.6 L517.8 199.0 L515.7 200.5 L513.6 202.1 L511.5 203.7 L509.5 205.4 L507.5 207.1 L505.6 208.8 L503.7 210.4 L502.0 212.1 L500.3 213.6 L498.8 215.0 L497.5 216.4 L496.3 217.7 L495.2 218.9 L494.1 220.1 L493.2 221.3 L492.3 222.5 L491.4 223.7 L490.6 224.9 L489.8 226.2 L489.0 227.6 L488.2 229.0 L487.3 230.5 L486.4 232.2 L485.4 234.1 L484.5 235.9 L483.5 237.9 L482.5 239.9 L481.6 242.0 L480.6 244.2 L479.7 246.3 L478.7 248.6 L477.9 250.8 L477.0 253.0 L476.2 255.3 L475.4 257.5 L474.7 259.7 L474.0 262.0 L473.3 264.3 L472.6 266.6 L472.0 268.9 L471.3 271.3 L470.7 273.7 L470.1 276.2 L469.6 278.7 L469.0 281.3 L468.5 283.9 L468.0 286.6 L467.5 289.4 L467.0 292.2 L466.5 295.1 L466.1 298.0 L465.7 301.0 L465.3 304.0 L464.9 307.0 L464.5 310.1 L464.2 313.2 L463.8 316.3 L463.5 319.4 L463.2 322.6 L462.9 325.9 L462.6 329.2 L462.3 332.5 L462.0 335.9 L461.8 339.3 L461.5 342.7 L461.3 346.1 L461.1 349.6 L460.9 353.0 L460.7 356.4 L460.6 359.8 L460.5 363.0 L460.4 366.1 L460.3 369.1 L460.3 372.0 L460.2 374.9 L460.2 377.9 L460.2 381.0 L460.2 384.2 L460.2 387.7 L460.2 391.4 L460.2 395.5 L460.2 400.0 L460.2 405.1 L460.2 411.1 L460.2 417.6 L460.2 424.6 L460.2 431.8 L460.2 439.0 L460.2 446.1 L460.2 452.9 L460.3 459.1 L460.3 464.7 L460.3 469.4 L460.3 473.0"/>
</g>
<path d="M396 147.9 L727 147.9" stroke="#b0b0b0" stroke-width="1.1" stroke-dasharray="1.8 2.6"/>
<path d="M176 154.8 L861 154.8" stroke="#c2b8a0" stroke-width="1.4"/>
<path d="M176 154.8 L861 154.8" stroke="#a88400" stroke-width="1.4" stroke-dasharray="6.5 3 7.5 17.4" stroke-dashoffset="-0.9"/>
<path d="M861 154.8 L995 154.8" stroke="#c8c8c8" stroke-width="1.2"/>
<path d="M176 153.3 L336 151 L400 149.7 C 418 149.7, 424.5 152, 424.5 156.5 C 424.5 161.5, 419 163.8, 410 163.8" stroke="#d8d8d8" stroke-width="1"/>
<path d="M410 163.8 L176 163.8" stroke="#c8c8c8" stroke-width="1" stroke-dasharray="3 1"/>
<path d="M495.5 161.4 L664.5 161.4 L664.5 163.8 L495.5 163.8 A1.2 1.2 0 0 1 495.5 161.4 Z" fill="#6a6a6a" stroke="#c4c4c4" stroke-width="0.7"/>
<path d="M664.5 162 C 690 161, 705 148, 732.8 147.8 L 780 149 L 861 154.8" stroke="#d8d8d8" stroke-width="1"/>
<path d="M664.5 162.5 L 780 159.7 L 861 155" stroke="#d0d0d0" stroke-width="1"/>
<path d="M319 169.2 C 340 170.5, 355 174, 368.4 178.9" stroke="#a0a0a0" stroke-width="0.9"/>
<path d="M368.4 178.9 L418 178.9" stroke="#e0e0e0" stroke-width="1"/>
<path d="M368.4 178.9 C 385 188, 400 200, 411 212" stroke="#d8d8d8" stroke-width="1"/>
<path d="M387 182.2 L415 182.2 Q 418 182.2, 417.4 185 L 412 207.5 Q 411 211, 408.6 208.4 L 385.5 185.2 Q 383.5 182.2, 387 182.2 Z" stroke="#e8e8e8" stroke-width="1"/>
<path d="M420 181 L 414 195" stroke="#bbb" stroke-width=".7"/>
<path d="M446.2 172 L446.2 473" stroke="#c8c0a8" stroke-width="1.2"/>
<path d="M446.2 172 L446.2 473" stroke="#b08a00" stroke-width="1.2" stroke-dasharray="7.5 2 7.5 17.4" stroke-dashoffset="3.2"/>
<path d="M441.2 282.4 C 446 276, 450 266, 453.8 250 L446.5 339.7 Z" fill="url(#hatch)" stroke="#d8d8d8" stroke-width="0.8"/>
<path d="M446.5 339.7 L441.2 282.4 C 437 255, 434 225, 438 205 C 441 190, 447 186, 450 187 C 455 188, 457 196, 456.2 215 C 455.5 232, 454.5 245, 453.8 250 L446.5 339.7" stroke="#e8e8e8" stroke-width="1.1"/>
<path d="M446.3 250 L446.3 340" stroke="#c8c0a8" stroke-width="1"/>
<path d="M446.3 172 L446.3 473" stroke="#b08a00" stroke-width="1.1" stroke-dasharray="7.5 2 7.5 17.4" stroke-dashoffset="3.2" clip-path="url(#nose)"/>
<path d="M454.2 238.5 L451 249 L453 249 L453 276 L456 276 L456 249 L458 249 Z" fill="#f4f4f4"/>
<path d="M420.3 149 L472.2 149 L446.2 175 Z M435 155.3 L446.2 166.3 L457.7 155.3 Z" fill="#7085d0" fill-rule="evenodd"/>
<path d="M472.2 149 L446.2 175 L446.2 166.3 L457.7 155.3 Z" fill="#ffffff"/>
<path d="M446.2 155.5 L446.2 166" stroke="#c8c0a8" stroke-width="1"/>
<path d="M421 149.5 L434 155" stroke="#4a5cd8" stroke-width=".8"/>
<path d="M446.2 149 L446.2 155" stroke="#4a5cd8" stroke-width="1"/>
<rect x="444.2" y="153.8" width="4" height="2.4" fill="#f0b000"/>
</g>
<g font-size="6.5" fill="#e8d800" font-weight="bold">
<text x="450.5" y="148.6" font-size="6">K1</text>
<text x="431.5" y="179.5">2</text>
<text x="456" y="179.5">4</text>
</g>
<g font-size="6.3" fill="#2a9a9a" letter-spacing="0">
<text x="307" y="307.5">01</text>
<text x="576" y="297.5">.02</text>
<text x="598" y="397">03</text>
<text x="769.5" y="359.5">01</text>
</g>
<g stroke="#9c9c9c" stroke-width="1" fill="none">
<path d="M194.5 81.5 L995 81.5"/>
<path d="M194.5 81.5 L194.5 473"/>
<path d="M197.0 78.2 L197.0 81.5"/>
<path d="M205.0 73.7 L205.0 81.5"/>
<path d="M213.0 78.2 L213.0 81.5"/>
<path d="M221.1 78.2 L221.1 81.5"/>
<path d="M229.1 78.2 L229.1 81.5"/>
<path d="M237.2 78.2 L237.2 81.5"/>
<path d="M245.2 75.6 L245.2 81.5"/>
<path d="M253.2 78.2 L253.2 81.5"/>
<path d="M261.3 78.2 L261.3 81.5"/>
<path d="M269.3 78.2 L269.3 81.5"/>
<path d="M277.4 78.2 L277.4 81.5"/>
<path d="M285.4 73.7 L285.4 81.5"/>
<path d="M293.4 78.2 L293.4 81.5"/>
<path d="M301.5 78.2 L301.5 81.5"/>
<path d="M309.5 78.2 L309.5 81.5"/>
<path d="M317.6 78.2 L317.6 81.5"/>
<path d="M325.6 75.6 L325.6 81.5"/>
<path d="M333.6 78.2 L333.6 81.5"/>
<path d="M341.7 78.2 L341.7 81.5"/>
<path d="M349.7 78.2 L349.7 81.5"/>
<path d="M357.8 78.2 L357.8 81.5"/>
<path d="M365.8 73.7 L365.8 81.5"/>
<path d="M373.8 78.2 L373.8 81.5"/>
<path d="M381.9 78.2 L381.9 81.5"/>
<path d="M389.9 78.2 L389.9 81.5"/>
<path d="M398.0 78.2 L398.0 81.5"/>
<path d="M406.0 75.6 L406.0 81.5"/>
<path d="M414.0 78.2 L414.0 81.5"/>
<path d="M422.1 78.2 L422.1 81.5"/>
<path d="M430.1 78.2 L430.1 81.5"/>
<path d="M438.2 78.2 L438.2 81.5"/>
<path d="M446.2 73.7 L446.2 81.5"/>
<path d="M454.2 78.2 L454.2 81.5"/>
<path d="M462.3 78.2 L462.3 81.5"/>
<path d="M470.3 78.2 L470.3 81.5"/>
<path d="M478.4 78.2 L478.4 81.5"/>
<path d="M486.4 75.6 L486.4 81.5"/>
<path d="M494.4 78.2 L494.4 81.5"/>
<path d="M502.5 78.2 L502.5 81.5"/>
<path d="M510.5 78.2 L510.5 81.5"/>
<path d="M518.6 78.2 L518.6 81.5"/>
<path d="M526.6 73.7 L526.6 81.5"/>
<path d="M534.6 78.2 L534.6 81.5"/>
<path d="M542.7 78.2 L542.7 81.5"/>
<path d="M550.7 78.2 L550.7 81.5"/>
<path d="M558.8 78.2 L558.8 81.5"/>
<path d="M566.8 75.6 L566.8 81.5"/>
<path d="M574.8 78.2 L574.8 81.5"/>
<path d="M582.9 78.2 L582.9 81.5"/>
<path d="M590.9 78.2 L590.9 81.5"/>
<path d="M599.0 78.2 L599.0 81.5"/>
<path d="M607.0 73.7 L607.0 81.5"/>
<path d="M615.0 78.2 L615.0 81.5"/>
<path d="M623.1 78.2 L623.1 81.5"/>
<path d="M631.1 78.2 L631.1 81.5"/>
<path d="M639.2 78.2 L639.2 81.5"/>
<path d="M647.2 75.6 L647.2 81.5"/>
<path d="M655.2 78.2 L655.2 81.5"/>
<path d="M663.3 78.2 L663.3 81.5"/>
<path d="M671.3 78.2 L671.3 81.5"/>
<path d="M679.4 78.2 L679.4 81.5"/>
<path d="M687.4 73.7 L687.4 81.5"/>
<path d="M695.4 78.2 L695.4 81.5"/>
<path d="M703.5 78.2 L703.5 81.5"/>
<path d="M711.5 78.2 L711.5 81.5"/>
<path d="M719.6 78.2 L719.6 81.5"/>
<path d="M727.6 75.6 L727.6 81.5"/>
<path d="M735.6 78.2 L735.6 81.5"/>
<path d="M743.7 78.2 L743.7 81.5"/>
<path d="M751.7 78.2 L751.7 81.5"/>
<path d="M759.8 78.2 L759.8 81.5"/>
<path d="M767.8 73.7 L767.8 81.5"/>
<path d="M775.8 78.2 L775.8 81.5"/>
<path d="M783.9 78.2 L783.9 81.5"/>
<path d="M791.9 78.2 L791.9 81.5"/>
<path d="M800.0 78.2 L800.0 81.5"/>
<path d="M808.0 75.6 L808.0 81.5"/>
<path d="M816.0 78.2 L816.0 81.5"/>
<path d="M824.1 78.2 L824.1 81.5"/>
<path d="M832.1 78.2 L832.1 81.5"/>
<path d="M840.2 78.2 L840.2 81.5"/>
<path d="M848.2 73.7 L848.2 81.5"/>
<path d="M856.2 78.2 L856.2 81.5"/>
<path d="M864.3 78.2 L864.3 81.5"/>
<path d="M872.3 78.2 L872.3 81.5"/>
<path d="M880.4 78.2 L880.4 81.5"/>
<path d="M888.4 75.6 L888.4 81.5"/>
<path d="M896.4 78.2 L896.4 81.5"/>
<path d="M904.5 78.2 L904.5 81.5"/>
<path d="M912.5 78.2 L912.5 81.5"/>
<path d="M920.6 78.2 L920.6 81.5"/>
<path d="M928.6 73.7 L928.6 81.5"/>
<path d="M936.6 78.2 L936.6 81.5"/>
<path d="M944.7 78.2 L944.7 81.5"/>
<path d="M952.7 78.2 L952.7 81.5"/>
<path d="M960.8 78.2 L960.8 81.5"/>
<path d="M968.8 75.6 L968.8 81.5"/>
<path d="M976.8 78.2 L976.8 81.5"/>
<path d="M984.9 78.2 L984.9 81.5"/>
<path d="M992.9 78.2 L992.9 81.5"/>
<path d="M191.3 468.4 L194.5 468.4"/>
<path d="M191.3 460.3 L194.5 460.3"/>
<path d="M191.3 452.3 L194.5 452.3"/>
<path d="M191.3 444.2 L194.5 444.2"/>
<path d="M189 436.2 L194.5 436.2"/>
<path d="M191.3 428.2 L194.5 428.2"/>
<path d="M191.3 420.1 L194.5 420.1"/>
<path d="M191.3 412.1 L194.5 412.1"/>
<path d="M191.3 404.0 L194.5 404.0"/>
<path d="M186.3 396.0 L194.5 396.0"/>
<path d="M191.3 388.0 L194.5 388.0"/>
<path d="M191.3 379.9 L194.5 379.9"/>
<path d="M191.3 371.9 L194.5 371.9"/>
<path d="M191.3 363.8 L194.5 363.8"/>
<path d="M189 355.8 L194.5 355.8"/>
<path d="M191.3 347.8 L194.5 347.8"/>
<path d="M191.3 339.7 L194.5 339.7"/>
<path d="M191.3 331.7 L194.5 331.7"/>
<path d="M191.3 323.6 L194.5 323.6"/>
<path d="M186.3 315.6 L194.5 315.6"/>
<path d="M191.3 307.6 L194.5 307.6"/>
<path d="M191.3 299.5 L194.5 299.5"/>
<path d="M191.3 291.5 L194.5 291.5"/>
<path d="M191.3 283.4 L194.5 283.4"/>
<path d="M189 275.4 L194.5 275.4"/>
<path d="M191.3 267.4 L194.5 267.4"/>
<path d="M191.3 259.3 L194.5 259.3"/>
<path d="M191.3 251.3 L194.5 251.3"/>
<path d="M191.3 243.2 L194.5 243.2"/>
<path d="M186.3 235.2 L194.5 235.2"/>
<path d="M191.3 227.2 L194.5 227.2"/>
<path d="M191.3 219.1 L194.5 219.1"/>
<path d="M191.3 211.1 L194.5 211.1"/>
<path d="M191.3 203.0 L194.5 203.0"/>
<path d="M189 195.0 L194.5 195.0"/>
<path d="M191.3 187.0 L194.5 187.0"/>
<path d="M191.3 178.9 L194.5 178.9"/>
<path d="M191.3 170.9 L194.5 170.9"/>
<path d="M191.3 162.8 L194.5 162.8"/>
<path d="M186.3 154.8 L194.5 154.8"/>
<path d="M191.3 146.8 L194.5 146.8"/>
<path d="M191.3 138.7 L194.5 138.7"/>
<path d="M191.3 130.7 L194.5 130.7"/>
<path d="M191.3 122.6 L194.5 122.6"/>
<path d="M189 114.6 L194.5 114.6"/>
<path d="M191.3 106.6 L194.5 106.6"/>
<path d="M191.3 98.5 L194.5 98.5"/>
<path d="M191.3 90.5 L194.5 90.5"/>
</g>
<g font-size="5.6" fill="#f4f4f4" text-anchor="middle" letter-spacing="-0.1" font-weight="bold">
<text x="205.0" y="70.5">-60m</text>
<text x="285.4" y="70.5">-40m</text>
<text x="365.8" y="70.5">-20m</text>
<text x="446.2" y="71" font-size="8.5" font-weight="bold" fill="#f2b000">0m</text>
<text x="526.6" y="70.5">20m</text>
<text x="607.0" y="70.5">40m</text>
<text x="687.4" y="70.5">60m</text>
<text x="767.8" y="70.5">80m</text>
<text x="848.2" y="71" font-size="8.5" font-weight="bold" fill="#f2b000">100m</text>
<text x="928.6" y="70.5">120m</text>
<text transform="translate(183.6 476.4) rotate(-90)">-80m</text>
<text transform="translate(183.6 396.0) rotate(-90)">-60m</text>
<text transform="translate(183.6 315.6) rotate(-90)">-40m</text>
<text transform="translate(183.6 235.2) rotate(-90)">-20m</text>
<text transform="translate(183.8 154.8) rotate(-90)" font-size="8.5" font-weight="bold" fill="#f2b000">0m</text>
</g>
<rect x="176" y="62" width="18.5" height="19.5" fill="#c4c4c4"/>
</svg>
<!--/CANVAS-->

<!-- Right scrollbar / toolbar -->
<div class="a" style="left:995px;top:62px;width:8px;height:411px;background:linear-gradient(90deg,#8a8a8a,#7a7a7a 50%,#6a6a6a)"></div>
<div class="a" style="left:995px;top:71px;width:8px;height:232px;background:linear-gradient(90deg,#d0d0d0,#bcbcbc 55%,#8c8c8c);border-bottom:1px solid #e0e0e0"></div>
<div class="a" style="left:1003px;top:62px;width:21px;height:420px;background:linear-gradient(90deg,#f4f4f4,#fafafa)"></div>

<!-- Horizontal scrollbar -->
<div class="a" style="left:176px;top:473px;width:819px;height:9px;background:linear-gradient(#8a8a8a,#7a7a7a 50%,#6a6a6a)"></div>
<div class="a" style="left:494px;top:473px;width:277px;height:9px;background:linear-gradient(#d0d0d0,#bdbdbd 55%,#8c8c8c)"></div>

<!-- status -->
<div class="t" style="left:156px;top:484.5px;color:#2a2a2a;font-size:7px;letter-spacing:-0.5px">X=50.688&nbsp; Y=-29.346</div>

<!-- 2D/3D tabs -->
<div class="a" style="left:154px;top:491px;width:870px;height:16px;background:linear-gradient(#f8f8f8,#ececec)"></div>
<div class="a" style="left:155px;top:492px;width:51px;height:15px;background:#a9bdee;border:1px solid #7f9be6"></div>

<!-- Left options panel -->
<div class="a" style="left:0;top:262px;width:146px;height:1px;background:#a0a0a0"></div>
<div class="hdr" style="left:0;top:271px;width:145px"><div class="mi"></div></div>
<div class="t" style="left:13px;top:274px;color:#222">Επιλογές Οριζοντιογραφίας</div>
<div class="a" style="left:0;top:284px;width:146px;height:223px;background:#fff"></div>
<div class="a" style="left:65px;top:284px;width:1px;height:223px;background:#e4e4e4"></div>
<svg class="a" style="left:110px;top:271px" width="36" height="12" viewBox="110 271 36 12"><circle cx="115.8" cy="277.1" r="3.6" fill="#f2ae70"/><circle cx="125.5" cy="277.1" r="3.6" fill="#f2ae70"/><rect x="131.4" y="273.5" width="11.4" height="7.2" rx="3.6" fill="#f2ae70"/><path d="M114.2 277.90000000000003l1.6-1.6 1.6 1.6" stroke="#fff" stroke-width="1" fill="none"/><path d="M125.5 275.20000000000005v0.8M125.5 278.20000000000005v0.8" stroke="#fff" stroke-width="1.1"/><path d="M135.3 275.1l3.6 4M138.9 275.1l-3.6 4" stroke="#fff" stroke-width="1.1"/></svg>
<div class="t" style="left:10.8px;top:284.1px;color:#1e2a44">Γενικά</div>
<div class="a" style="left:10px;top:291.8px;width:20px;height:9px;background:#e0e0e0"></div>
<div class="t" style="left:10.8px;top:292.8px;color:#1e2a44">Σχέδιο</div>
<div class="t" style="left:10.8px;top:301.5px;color:#1e2a44">Έδαφος</div>
<div class="t" style="left:19.3px;top:310.1px;color:#1e2a44">Ογκομέτρηση</div>
<div class="t" style="left:19.3px;top:318.5px;color:#1e2a44">Μοντέλο</div>
<div class="t" style="left:28.0px;top:327.0px;color:#1e2a44">Χρωματισμός</div>
<div class="t" style="left:28.0px;top:335.5px;color:#1e2a44">Εδάφη</div>
<div class="t" style="left:36.8px;top:344.0px;color:#1e2a44">Έδαφος 1</div>
<div class="t" style="left:10.8px;top:352.5px;color:#1e2a44">Χάραξη</div>
<div class="t" style="left:19.3px;top:361.0px;color:#1e2a44">Κόμβοι</div>
<div class="t" style="left:19.6px;top:369.5px;color:#1e2a44">Δρόμοι</div>
<div class="t" style="left:28.0px;top:377.9px;color:#1e2a44">Δρόμος 1</div>
<div class="t" style="left:28.0px;top:386.5px;color:#1e2a44">Δρόμος 2</div>
<div class="t" style="left:10.8px;top:394.8px;color:#1e2a44">Προσέγγιση</div>
<div class="t" style="left:77.8px;top:284.5px;color:#1e2a44">Σημεία γραμμών σχεδίου</div>
<div class="t" style="left:77.8px;top:292.8px;color:#1e2a44">Ενότητες</div>
<div class="t" style="left:85.9px;top:301.5px;color:#1e2a44">Βασική</div>
<div class="t" style="left:85.9px;top:310.1px;color:#1e2a44">Λωρίδα Αρ. Στροφής</div>
<div class="t" style="left:85.9px;top:318.5px;color:#1e2a44">Νησίδα Κύριου</div>
<div class="t" style="left:85.9px;top:327.0px;color:#1e2a44">Σταγόνα</div>
<div class="t" style="left:85.9px;top:335.5px;color:#1e2a44">Τριγωνική</div>
<svg class="a" style="left:0;top:280px" width="146" height="125" viewBox="0 280 146 125">
<rect x="4.3" y="286.6" width="2" height="2" fill="#b8b8b8"/>
<rect x="2.5" y="293.3" width="6.5" height="6.5" fill="#fff" stroke="#555" stroke-width="0.8"/>
<rect x="2.5" y="302.0" width="6.5" height="6.5" fill="#fff" stroke="#555" stroke-width="0.8"/>
<path d="M3.8 305.2l1.8 1.8 3.2-3.8" stroke="#444" stroke-width="0.8" fill="none"/>
<rect x="11.0" y="310.6" width="6.5" height="6.5" fill="#fff" stroke="#555" stroke-width="0.8"/>
<path d="M12.3 313.8l1.8 1.8 3.2-3.8" stroke="#444" stroke-width="0.8" fill="none"/>
<rect x="11.0" y="319.0" width="6.5" height="6.5" fill="#fff" stroke="#555" stroke-width="0.8"/>
<path d="M12.3 322.2l1.8 1.8 3.2-3.8" stroke="#444" stroke-width="0.8" fill="none"/>
<rect x="21.6" y="329.5" width="2" height="2" fill="#b8b8b8"/>
<rect x="21.6" y="338.0" width="2" height="2" fill="#b8b8b8"/>
<rect x="28.2" y="344.5" width="6.5" height="6.5" fill="#fff" stroke="#555" stroke-width="0.8"/>
<path d="M29.5 347.7l1.8 1.8 3.2-3.8" stroke="#444" stroke-width="0.8" fill="none"/>
<rect x="2.5" y="353.0" width="6.5" height="6.5" fill="#fff" stroke="#555" stroke-width="0.8"/>
<path d="M3.8 356.2l1.8 1.8 3.2-3.8" stroke="#444" stroke-width="0.8" fill="none"/>
<rect x="11.0" y="361.5" width="6.5" height="6.5" fill="#fff" stroke="#555" stroke-width="0.8"/>
<path d="M12.3 364.7l1.8 1.8 3.2-3.8" stroke="#444" stroke-width="0.8" fill="none"/>
<rect x="13.5" y="372.0" width="2" height="2" fill="#b8b8b8"/>
<rect x="19.7" y="378.4" width="6.5" height="6.5" fill="#fff" stroke="#555" stroke-width="0.8"/>
<path d="M21.0 381.6l1.8 1.8 3.2-3.8" stroke="#444" stroke-width="0.8" fill="none"/>
<rect x="19.7" y="387.0" width="6.5" height="6.5" fill="#fff" stroke="#555" stroke-width="0.8"/>
<path d="M21.0 390.2l1.8 1.8 3.2-3.8" stroke="#444" stroke-width="0.8" fill="none"/>
<rect x="2.5" y="395.3" width="6.5" height="6.5" fill="#fff" stroke="#555" stroke-width="0.8"/>
<path d="M3.8 398.5l1.8 1.8 3.2-3.8" stroke="#444" stroke-width="0.8" fill="none"/>
<rect x="69.5" y="285.0" width="6.5" height="6.5" fill="#fff" stroke="#555" stroke-width="0.8"/>
<rect x="72.0" y="295.3" width="2" height="2" fill="#b8b8b8"/>
<rect x="77.7" y="302.0" width="6.5" height="6.5" fill="#fff" stroke="#555" stroke-width="0.8"/>
<path d="M79.0 305.2l1.8 1.8 3.2-3.8" stroke="#444" stroke-width="0.8" fill="none"/>
<rect x="77.7" y="310.6" width="6.5" height="6.5" fill="#fff" stroke="#555" stroke-width="0.8"/>
<path d="M79.0 313.8l1.8 1.8 3.2-3.8" stroke="#444" stroke-width="0.8" fill="none"/>
<rect x="77.7" y="319.0" width="6.5" height="6.5" fill="#fff" stroke="#555" stroke-width="0.8"/>
<path d="M79.0 322.2l1.8 1.8 3.2-3.8" stroke="#444" stroke-width="0.8" fill="none"/>
<rect x="77.7" y="327.5" width="6.5" height="6.5" fill="#fff" stroke="#555" stroke-width="0.8"/>
<path d="M79.0 330.7l1.8 1.8 3.2-3.8" stroke="#444" stroke-width="0.8" fill="none"/>
<rect x="77.7" y="336.0" width="6.5" height="6.5" fill="#fff" stroke="#555" stroke-width="0.8"/>
<path d="M79.0 339.2l1.8 1.8 3.2-3.8" stroke="#444" stroke-width="0.8" fill="none"/>
</svg>

<!-- Bottom splitter -->
<div class="a" style="left:0;top:507px;width:1024px;height:1px;background:#a0a0a0"></div>

<!-- Bottom panel -->
<div class="hdr" style="left:0;top:516px;width:1024px"><div class="mi"></div></div>
<div class="t" style="left:13px;top:520px;color:#222;letter-spacing:-0.45px">Διάγραμμα Επικλίσεων</div>
<div class="a" style="left:0;top:540px;width:1024px;height:15px;background:linear-gradient(#fdfdfd,#ececec)"></div>

<!-- Dialog -->
<!--CHROME2-->
<!-- main header right button -->
<svg class="a" style="left:1013px;top:37px" width="9" height="9" viewBox="1013 37 9 9"><circle cx="1017.4" cy="41.2" r="3.6" fill="#f2ae70"/><path d="M1017.4 39.3v0.8M1017.4 42.3v0.8" stroke="#fff" stroke-width="1.1"/></svg>
<!-- right toolbar icons -->
<svg class="a" style="left:1003px;top:62px" width="21" height="145" viewBox="1003 62 21 145">
<g fill="#cfcfcf">
<rect x="1009" y="65.7" width="9" height="14.5"/>
<rect x="1009" y="86" width="9" height="15"/>
<rect x="1009" y="106" width="9" height="15"/>
<path d="M1010 126.5h6v4h4v6h-4v4.5h-6v-4.5h-4v-6h4z"/>
<rect x="1012" y="147" width="9" height="14"/>
<rect x="1006" y="167" width="8" height="14.5"/>
<rect x="1009" y="187" width="9" height="14.5"/>
</g>
<g stroke="#f4f4f4" stroke-width=".7" stroke-dasharray="1 1.5">
<path d="M1013.5 66.5v13M1013.5 87v13M1013.5 107v13M1016.5 148v12M1010 168v13M1013.5 188v13"/>
</g>
<g fill="#8c7ccc" stroke="#8c7ccc">
<path d="M1007 93.4h13" stroke-width="1.2" fill="none"/>
<path d="M1007.5 106.5v4.5l1.5 2" stroke-width="1.8" fill="none"/>
<circle cx="1013" cy="133.6" r="3.2" stroke="none"/>
<path d="M1006 151.5c3 0 5.5 2.5 5.5 9.5" stroke-width="2.2" fill="none"/>
<path d="M1021 170.5c-3 0-5.5 2.5-5.5 10.5" stroke-width="2.2" fill="none"/>
<path d="M1007 191a3 3 0 0 1 0 6z M1020 191a3 3 0 0 0 0 6z" stroke="none"/>
</g>
</svg>
<!-- scroll arrow buttons -->
<div class="a" style="left:995px;top:62px;width:8px;height:9px;background:#f2b400"></div>
<svg class="a" style="left:995px;top:62px" width="8" height="9"><path d="M2 5.5l2-2 2 2" stroke="#222" stroke-width="1.2" fill="none"/></svg>
<div class="a" style="left:995px;top:464px;width:8px;height:9px;background:#f2b400"></div>
<svg class="a" style="left:995px;top:464px" width="8" height="9"><path d="M2 3.5l2 2 2-2" stroke="#222" stroke-width="1.2" fill="none"/></svg>
<div class="a" style="left:176px;top:473px;width:8px;height:9px;background:#f2b400"></div>
<svg class="a" style="left:176px;top:473px" width="8" height="9"><path d="M5 2.5l-2 2 2 2" stroke="#222" stroke-width="1.2" fill="none"/></svg>
<div class="a" style="left:995px;top:473px;width:8px;height:9px;background:#000"></div>
<div class="a" style="left:986px;top:473px;width:8px;height:9px;background:#f2b400"></div>
<svg class="a" style="left:986px;top:473px" width="8" height="9"><path d="M3 2.5l2 2-2 2" stroke="#222" stroke-width="1.2" fill="none"/></svg>
<div class="a" style="left:632px;top:475px;width:1px;height:4px;background:#888"></div><div class="a" style="left:634px;top:475px;width:1px;height:4px;background:#888"></div>
<div class="a" style="left:997px;top:185px;width:4px;height:1px;background:#888"></div><div class="a" style="left:997px;top:187px;width:4px;height:1px;background:#888"></div>
<!-- status bar dividers -->
<div class="a" style="left:395px;top:483px;width:1px;height:8px;background:#d4d4d4"></div>
<div class="a" style="left:458px;top:483px;width:1px;height:8px;background:#d4d4d4"></div>
<div class="a" style="left:592px;top:483px;width:1px;height:8px;background:#d4d4d4"></div>
<!-- 2D/3D contents -->
<div class="t" style="left:167px;top:496px;color:#86a88a;font-size:6.5px">2D</div>
<svg class="a" style="left:160px;top:493px" width="90" height="13" viewBox="160 493 90 13">
<path d="M182 494.5h7v3h2.5l-6 5.5-6-5.5h2.5z" fill="#96c490" stroke="#7aa878" stroke-width=".6"/>
<path d="M164 504h31" stroke="#6a9a6a" stroke-width="1" stroke-dasharray="1 1"/>
<path d="M231.5 502v-7.5h3l4.5 4v3.5z" fill="#a8cca0" stroke="#7aa878" stroke-width=".7"/>
<path d="M216 504h31" stroke="#6a9a6a" stroke-width="1" stroke-dasharray="1 1"/>
</svg>
<div class="t" style="left:219px;top:496px;color:#86a88a;font-size:6.5px">3D</div>
<!-- splitter dots -->
<div class="a" style="left:2px;top:266px;width:142px;height:1px;border-top:1px dotted #c0c0c0"></div>
<div class="a" style="left:2px;top:511px;width:1020px;height:1px;border-top:1px dotted #c0c0c0"></div>
<div class="a" style="left:496px;top:508px;width:33px;height:6px;background:#c9e7c3;border:1px solid #7cc47a;border-radius:2px"></div>
<svg class="a" style="left:509px;top:508px" width="6" height="6"><path d="M0.5 1.5h5l-2.5 3z" fill="#fff"/></svg>
<!-- bottom panel -->
<div class="a" style="left:1009px;top:518px;width:13px;height:9px;border-radius:4.5px;background:#f3b27a"></div>
<svg class="a" style="left:1009px;top:518px" width="13" height="9"><path d="M4.5 2.5l4 4M8.5 2.5l-4 4" stroke="#fff" stroke-width="1.2"/></svg>
<div class="a" style="left:0;top:529px;width:1024px;height:11px;background:#f0f0f0"></div>
<div class="a" style="left:1px;top:530px;width:32px;height:10px;background:#ececec;border:1px solid #dcdcdc;border-bottom:none"></div>
<div class="a" style="left:33px;top:529px;width:64px;height:11px;background:#fff"></div>
<div class="t" style="left:4px;top:533px;color:#1e2a50">Μηνύματα</div>
<div class="t" style="left:36.5px;top:532.5px;color:#222;letter-spacing:-0.5px">Διάγραμμα Επικλίσεων</div>
<div class="a" style="left:0;top:540px;width:1024px;height:1px;background:#e0e0e0"></div>
<div class="t" style="left:5.5px;top:546px;color:#222;font-size:7px">Δρόμος 1</div>
<svg class="a" style="left:36px;top:548px" width="5" height="3"><path d="M0 0h4.5l-2.25 2.5z" fill="#111"/></svg>
<div class="a" style="left:42px;top:542px;width:1px;height:13px;background:#d0d0d0"></div>
<div class="t" style="left:48.5px;top:546px;color:#222;font-size:7px">x1.0</div>
<svg class="a" style="left:67px;top:548px" width="5" height="3"><path d="M0 0h4.5l-2.25 2.5z" fill="#111"/></svg>
<div class="a" style="left:73px;top:542px;width:1px;height:13px;background:#d0d0d0"></div>
<svg class="a" style="left:79px;top:544px" width="10" height="7"><rect x="0.5" y="0.5" width="8" height="6" fill="#e8d890"/><rect x="1" y="1" width="2.5" height="2" fill="#3aa83a"/><rect x="5.5" y="1" width="2.5" height="2" fill="#3aa83a"/><rect x="3.2" y="3.5" width="2.5" height="2.5" fill="#3aa83a"/></svg>

<!--/CHROME2-->
<!--DIALOG-->
<!-- dialog frame -->
<div class="a" style="left:779px;top:163px;width:204px;height:295px;background:#f0f0f0;border:1px solid #3c8ad8"></div>
<div class="a" style="left:780px;top:164px;width:202px;height:13px;background:#fff"></div>
<div class="t" style="left:782px;top:167px;font-size:7px;color:#111;letter-spacing:-0.28px">Προδιαγραφές Ισόπεδου Κόμβου</div>
<svg class="a" style="left:970px;top:166px" width="8" height="8"><path d="M1.5 1.5l5 5M6.5 1.5l-5 5" stroke="#222" stroke-width=".9"/></svg>
<!-- tabs -->
<div class="a" style="left:785px;top:182px;width:23px;height:11px;background:#f0f0f0;border:1px solid #d9d9d9"></div>
<div class="a" style="left:807px;top:182px;width:23px;height:11px;background:#f0f0f0;border:1px solid #d9d9d9"></div>
<div class="a" style="left:829px;top:182px;width:23px;height:11px;background:#f0f0f0;border:1px solid #d9d9d9"></div>
<div class="a" style="left:873px;top:182px;width:34px;height:11px;background:#f0f0f0;border:1px solid #d9d9d9"></div>
<div class="a" style="left:906px;top:182px;width:24px;height:11px;background:#f0f0f0;border:1px solid #d9d9d9"></div>
<div class="a" style="left:785px;top:192px;width:178px;height:243px;background:#fff;border:1px solid #d9d9d9"></div>
<div class="a" style="left:851px;top:180px;width:23px;height:14px;background:#fff;border:1px solid #d9d9d9;border-bottom:none"></div>
<div class="t" style="left:789px;top:185px;color:#111">1ο</div>
<div class="t" style="left:811px;top:185px;color:#111">2ο</div>
<div class="t" style="left:833px;top:185px;color:#111">3ο</div>
<div class="t" style="left:856px;top:183px;color:#111">4ο</div>
<div class="t" style="left:876px;top:185px;color:#111">Σταγόνα 2</div>
<div class="t" style="left:909px;top:185px;color:#111">Γενικά</div>
<!-- side icons -->
<div class="a" style="left:969px;top:192px;width:11px;height:11px;background:#e8e8e8;border:1px solid #a8a8a8"></div>
<svg class="a" style="left:970px;top:193px" width="9" height="9"><rect x="0.5" y="0.5" width="8" height="8" fill="#5d8fd8"/><rect x="1.5" y="2.5" width="6" height="5" fill="#fff"/><rect x="2" y="3" width="1.5" height="1" fill="#2a9a30"/><rect x="2" y="5" width="1.5" height="1" fill="#2a9a30"/><path d="M4 3.5h3M4 5.5h3" stroke="#5d8fd8" stroke-width=".8"/></svg>
<div class="a" style="left:968px;top:427px;width:11px;height:10px;background:#e8e8e8;border:1px solid #a8a8a8"></div>
<svg class="a" style="left:969px;top:428px" width="9" height="8"><rect x="0.5" y="0.5" width="8" height="7" fill="#1840b0"/><path d="M2 4h4M4.5 2.3l1.8 1.7-1.8 1.7" stroke="#fff" stroke-width="1" fill="none"/></svg>
<!-- group 4o -->
<div class="a" style="left:789px;top:199px;width:173px;height:100px;border:1px solid #dcdcdc"></div>
<div class="t" style="left:791px;top:196.5px;background:#fff;padding:0 1px;color:#111">4ο Τεταρτημόριο</div>
<div class="t" style="left:792px;top:206px;color:#111">Γωνία: 90.00 °</div>
<div class="cb k" style="left:792px;top:213px"></div>
<div class="t" style="left:800px;top:214px;color:#111">Αυτόματο</div>
<div class="rd" style="left:792px;top:223px"></div><div class="t" style="left:800.5px;top:224px;color:#111">Μία ακτίνα</div>
<div class="rd k" style="left:792px;top:232.3px"></div><div class="t" style="left:800.5px;top:233px;color:#111">Τρεις ακτίνες RAS</div>
<div class="rd" style="left:792px;top:241.6px"></div><div class="t" style="left:800.5px;top:242px;color:#111;letter-spacing:-0.55px">Τρεις ακτίνες AASHTO</div>
<div class="rd" style="left:792px;top:250.7px"></div><div class="t" style="left:800.5px;top:251.5px;color:#111">Μία ακτίνα Taper</div>
<div class="rd" style="left:792px;top:259.5px"></div><div class="t" style="left:800.5px;top:260.5px;color:#111">Taper 2 ακτίνες</div>
<div class="rd" style="left:792px;top:268.4px"></div><div class="t" style="left:800.5px;top:269.5px;color:#111">Μία ακτίνα Κλωθοειδ.</div>
<!-- R frame -->
<div class="a" style="left:858px;top:205px;width:98px;height:89px;border:1px solid #dcdcdc"></div>
<div class="t" style="left:861px;top:210px;color:#a0a0a0">R1</div>
<div class="t" style="left:913px;top:210px;color:#a0a0a0">Γωνία 1 (°)</div>
<div class="inp d" style="left:861px;top:218px;width:41px">75</div>
<div class="inp d" style="left:913px;top:218px;width:40px">20.25</div>
<div class="t" style="left:861px;top:232px;color:#111">R2</div>
<div class="inp" style="left:861px;top:240px;width:41px">25</div>
<div class="t" style="left:861px;top:255px;color:#a0a0a0">R3</div>
<div class="t" style="left:913px;top:255px;color:#a0a0a0">Γωνία 3 (°)</div>
<div class="inp d" style="left:861px;top:263px;width:41px">50</div>
<div class="inp d" style="left:913px;top:263px;width:40px">15.75</div>
<!-- group kinisi -->
<div class="a" style="left:788px;top:304px;width:172px;height:130px;border:1px solid #dcdcdc"></div>
<div class="t" style="left:791px;top:301px;background:#fff;padding:0 1px;color:#111">Κίνηση προς:</div>
<div class="cb k" style="left:797px;top:309px"></div><div class="t" style="left:805px;top:311px;color:#111">Αριστερά</div>
<div class="cb k" style="left:806px;top:319px"></div><div class="t" style="left:814px;top:320px;color:#111">Λωρίδα αριστ. στροφής</div>
<div class="t" style="left:884px;top:309px;color:#111">Πλάτος</div>
<div class="t" style="left:922px;top:309px;color:#111">Μήκος</div>
<div class="inp" style="left:883px;top:317px;width:36px">3.5</div>
<div class="inp" style="left:922px;top:317px;width:36px">50</div>
<div class="cb k" style="left:797px;top:355px"></div><div class="t" style="left:805px;top:357px;color:#111">Δεξιά</div>
<div class="t" style="left:884px;top:354px;color:#111">Πλάτος</div>
<div class="t" style="left:922px;top:354px;color:#111">Μήκος</div>
<div class="cb" style="left:806px;top:364px"></div><div class="t" style="left:814px;top:364.5px;color:#111">Λωρίδα επιβράδυνσης</div>
<div class="inp" style="left:883px;top:361px;width:36px">3.75</div>
<div class="inp" style="left:922px;top:361px;width:36px">90</div>
<div class="cb" style="left:806px;top:376.5px"></div><div class="t" style="left:814px;top:377px;color:#111">Λωρίδα επιτάχυνσης</div>
<div class="inp" style="left:883px;top:373px;width:36px">3.75</div>
<div class="inp" style="left:922px;top:373px;width:36px">90</div>
<div class="t" style="left:884px;top:391px;color:#111">Απόσταση 1</div>
<div class="t" style="left:922px;top:391px;color:#111">Απόσταση 2</div>
<div class="cb" style="left:806px;top:401px"></div><div class="t" style="left:814px;top:401px;color:#111">Τριγων. νησίδα εισόδου</div>
<div class="inp" style="left:883px;top:398px;width:36px">5.5</div>
<div class="inp" style="left:922px;top:398px;width:36px">4.5</div>
<div class="t" style="left:820px;top:413px;color:#111">Μέγιστη R κατασκευής</div>
<div class="inp" style="left:883px;top:410px;width:36px">25</div>
<!-- buttons -->
<div class="btn" style="left:849px;top:441px;width:39px;border-color:#0078d7">Εντάξει</div>
<div class="btn" style="left:892px;top:441px;width:39px">Άκυρο</div>
<div class="btn" style="left:935px;top:441px;width:40px">Εφαρμογή</div>

<!--/DIALOG-->

</body></html>
